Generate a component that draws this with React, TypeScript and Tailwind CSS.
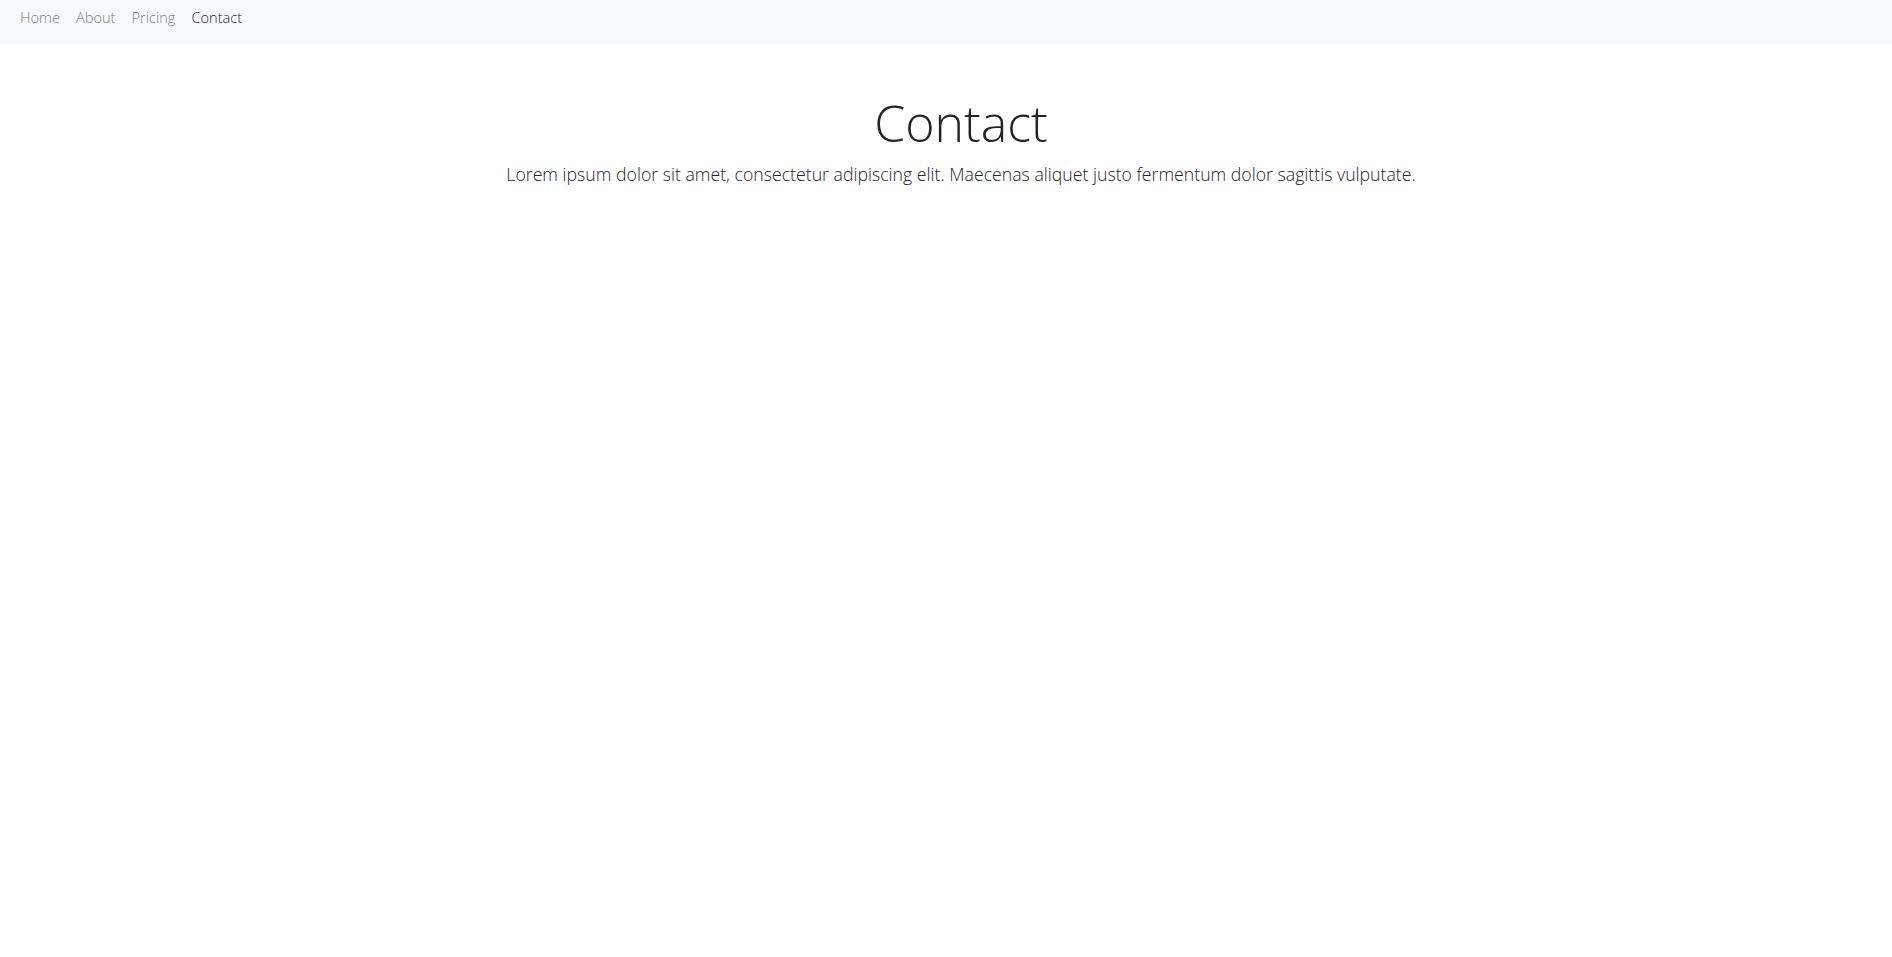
export default function App() {
  const links = ['Home', 'About', 'Pricing', 'Contact'];
  return (
    <div className="min-h-screen bg-white text-[#212529]" style={{ fontFamily: '"Open Sans", "Noto Sans", sans-serif' }}>
      {/* Navbar */}
      <nav className="flex h-[44px] items-start bg-[#f8f9fa] px-3 pt-[5px]">
        <ul className="flex items-center">
          {links.map((l) => (
            <li key={l}>
              <a
                href="#"
                className={
                  l === 'Contact'
                    ? 'block px-2 text-[14.6px] leading-6 font-light text-black/90'
                    : 'block px-2 text-[14.6px] leading-6 font-light text-black/55'
                }
              >
                {l}
              </a>
            </li>
          ))}
        </ul>
      </nav>

      {/* Hero */}
      <main className="flex flex-col items-center pl-[30px] pt-[49px] text-center">
        <h1 className="text-[50px] font-light leading-[1.2]">Contact</h1>
        <p className="mt-[8px] text-[17.7px] font-light">
          Lorem ipsum dolor sit amet, consectetur adipiscing elit. Maecenas aliquet justo fermentum dolor sagittis vulputate.
        </p>
      </main>
    </div>
  );
}
